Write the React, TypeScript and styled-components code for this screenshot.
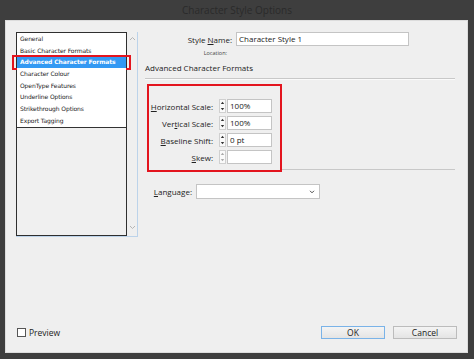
import styled, { createGlobalStyle } from 'styled-components'

const GlobalStyle = createGlobalStyle`
  html, body {
    margin: 0;
    padding: 0;
    background: #3e3e3e;
  }
  body {
    font-family: 'Liberation Sans', Arial, sans-serif;
    color: #222;
  }
`

const pages = [
  'General',
  'Basic Character Formats',
  'Advanced Character Formats',
  'Character Colour',
  'OpenType Features',
  'Underline Options',
  'Strikethrough Options',
  'Export Tagging',
]
const activePage = 2

const scaleFields = [
  { key: 'H', label: 'orizontal Scale:', pre: '', value: '100%' },
  { key: 't', label: 'ical Scale:', pre: 'Ver', value: '100%' },
  { key: 'B', label: 'aseline Shift:', pre: '', value: '0 pt' },
  { key: 'S', label: 'kew:', pre: '', value: '' },
]

export default function App() {
  return (
    <Screen>
      <GlobalStyle />
      <TitleBar>Character Style Options</TitleBar>
      <Panel>
        <Body>
          <ListFrame>
            <PageList>
              {pages.map((p, i) => (
                <PageItem key={p} $active={i === activePage}>
                  {p}
                </PageItem>
              ))}
            </PageList>
            <ScrollTrack>
              <ArrowGlyph viewBox='0 0 7 5'>
                <path d='M1 4 L3.5 1.5 L6 4' />
              </ArrowGlyph>
              <ArrowGlyph viewBox='0 0 7 5'>
                <path d='M1 1 L3.5 3.5 L6 1' />
              </ArrowGlyph>
            </ScrollTrack>
          </ListFrame>

          <Main>
            <FieldRow>
              <FieldLabel $w={87}>
                Style <u>N</u>ame:
              </FieldLabel>
              <TextBox $w={173}>Character Style 1</TextBox>
            </FieldRow>
            <LocationRow>
              <LocationLabel>Location:</LocationLabel>
            </LocationRow>
            <SectionTitle>Advanced Character Formats</SectionTitle>
            <Divider />
            <GroupRow>
              <ScaleGroup>
                {scaleFields.map((f) => (
                  <ScaleRow key={f.key}>
                    <ScaleLabel>
                      {f.pre}
                      <u>{f.key}</u>
                      {f.label}
                    </ScaleLabel>
                    <Spinner viewBox='0 0 7 14'>
                      <rect x='0.5' y='0.5' width='6' height='13' fill='#fafafa' stroke='#d0d0d0' />
                      <path d='M1.8 5 L3.5 2.8 L5.2 5 Z' fill={f.value ? '#333' : '#aaa'} />
                      <path d='M1.8 9 L3.5 11.2 L5.2 9 Z' fill={f.value ? '#333' : '#aaa'} />
                    </Spinner>
                    <TextBox $w={45}>{f.value}</TextBox>
                  </ScaleRow>
                ))}
              </ScaleGroup>
              <TrailLine />
            </GroupRow>
            <LanguageRow>
              <FieldLabel $w={40}>
                <u>L</u>anguage:
              </FieldLabel>
              <Select>
                <Chevron viewBox='0 0 7 5'>
                  <path d='M1 1 L3.5 3.5 L6 1' />
                </Chevron>
              </Select>
            </LanguageRow>
          </Main>
        </Body>

        <Footer>
          <CheckRow>
            <CheckBox />
            <span>Preview</span>
          </CheckRow>
          <Buttons>
            <Button $primary>OK</Button>
            <Button>Cancel</Button>
          </Buttons>
        </Footer>
      </Panel>
    </Screen>
  )
}

const Screen = styled.div`
  width: 474px;
  height: 359px;
  background: #3e3e3e;
  overflow: hidden;
`

const TitleBar = styled.div`
  height: 20px;
  line-height: 20px;
  text-align: center;
  font-family: 'Open Sans', 'Liberation Sans', sans-serif;
  font-size: 10px;
  color: #2a2a2a;
`

const Panel = styled.div`
  box-sizing: border-box;
  margin: 0 6px 0 5px;
  height: 333px;
  background: #efefef;
  border: 1px solid #dcdcdc;
  display: flex;
  flex-direction: column;
  padding: 11px 0 0 10px;
`

const Body = styled.div`
  flex: 1;
  display: flex;
  gap: 7px;
`

const ListFrame = styled.div`
  box-sizing: border-box;
  width: 122px;
  height: 205px;
  display: flex;
  border: 1px solid #bcd3ea;
  border-left: none;
  border-top: none;
`

const PageList = styled.div`
  box-sizing: border-box;
  width: 111px;
  height: 204px;
  border: 1px solid #2f2f2f;
  background: #f0f0f0;
`

const PageItem = styled.div<{ $active?: boolean }>`
  position: relative;
  height: 11.7px;
  line-height: 11.7px;
  padding-left: 3px;
  font-family: 'DejaVu Sans', sans-serif;
  font-size: 6px;
  letter-spacing: -0.1px;
  white-space: nowrap;
  color: ${(p) => (p.$active ? '#fff' : '#1a1a1a')};
  font-weight: ${(p) => (p.$active ? 'bold' : 'normal')};
  background: ${(p) => (p.$active ? '#3399f3' : '#fff')};
  &:last-child {
    border-bottom: 1px solid #333;
  }
  ${(p) =>
    p.$active &&
    `
    &::after {
      content: '';
      position: absolute;
      left: -5px;
      right: -5px;
      top: -1.5px;
      bottom: -1.5px;
      border: 2px solid #e3141e;
    }
  `}
`

const ScrollTrack = styled.div`
  width: 10px;
  display: flex;
  flex-direction: column;
  justify-content: space-between;
  align-items: center;
  padding: 4px 0 6px;
`

const ArrowGlyph = styled.svg`
  width: 7px;
  height: 5px;
  fill: none;
  stroke: #b5b5b5;
  stroke-width: 1;
`

const Main = styled.div`
  width: 310px;
  display: flex;
  flex-direction: column;
  font-family: 'Open Sans', 'Liberation Sans', sans-serif;
  font-size: 8px;
`

const FieldRow = styled.div`
  display: flex;
  align-items: center;
  gap: 4px;
  height: 14px;
`

const FieldLabel = styled.div<{ $w: number }>`
  width: ${(p) => p.$w}px;
  text-align: right;
  white-space: nowrap;
  color: #222;
`

const TextBox = styled.div<{ $w: number }>`
  box-sizing: border-box;
  width: ${(p) => p.$w}px;
  height: 14px;
  line-height: 12px;
  padding-left: 2px;
  background: #fff;
  border: 1px solid #c4c4c4;
  white-space: nowrap;
  color: #222;
`

const LocationRow = styled.div`
  height: 8px;
  margin-top: 3px;
  display: flex;
`

const LocationLabel = styled.div`
  width: 82px;
  text-align: right;
  font-size: 5.5px;
  line-height: 8px;
  color: #444;
`

const SectionTitle = styled.div`
  margin-top: 6px;
  height: 10px;
  line-height: 10px;
  font-size: 8px;
  color: #222;
`

const Divider = styled.div`
  margin-top: 5px;
  height: 1px;
  background: #c8c8c8;
  box-shadow: 0 1px 0 #fafafa;
`

const GroupRow = styled.div`
  display: flex;
  align-items: flex-end;
  margin-top: 5px;
`

const ScaleGroup = styled.div`
  box-sizing: border-box;
  margin-left: 2px;
  width: 135px;
  height: 88px;
  border: 2px solid #e3141e;
  padding-top: 13px;
  display: flex;
  flex-direction: column;
  gap: 3px;
`

const ScaleRow = styled.div`
  display: flex;
  align-items: center;
  height: 14px;
`

const ScaleLabel = styled.div`
  width: 64px;
  text-align: right;
  white-space: nowrap;
  margin-right: 6px;
`

const Spinner = styled.svg`
  width: 7px;
  height: 14px;
  margin-right: 1px;
  flex: none;
`

const TrailLine = styled.div`
  flex: 1;
  height: 1px;
  margin-bottom: 2px;
  background: #c8c8c8;
`

const LanguageRow = styled.div`
  display: flex;
  align-items: center;
  gap: 4px;
  margin-top: 12px;
  margin-left: 7px;
  height: 15px;
`

const Select = styled.div`
  box-sizing: border-box;
  width: 124px;
  height: 15px;
  background: #fff;
  border: 1px solid #c4c4c4;
  display: flex;
  align-items: center;
  justify-content: flex-end;
  padding-right: 4px;
`

const Chevron = styled.svg`
  width: 6px;
  height: 4px;
  fill: none;
  stroke: #444;
  stroke-width: 1.2;
`

const Footer = styled.div`
  display: flex;
  align-items: center;
  justify-content: space-between;
  height: 14px;
  margin-bottom: 13px;
  padding-right: 10px;
  padding-left: 1px;
  font-family: 'Open Sans', 'Liberation Sans', sans-serif;
  font-size: 8.5px;
`

const CheckRow = styled.div`
  display: flex;
  align-items: center;
  gap: 3px;
  color: #222;
`

const CheckBox = styled.div`
  box-sizing: border-box;
  width: 9px;
  height: 9px;
  border: 1px solid #555;
  background: #fff;
`

const Buttons = styled.div`
  display: flex;
  gap: 8px;
`

const Button = styled.div<{ $primary?: boolean }>`
  box-sizing: border-box;
  width: 64px;
  height: 13px;
  line-height: 11px;
  text-align: center;
  color: #222;
  background: linear-gradient(#f4f4f4, #e4e4e4);
  border: 1px solid ${(p) => (p.$primary ? '#7ab3e8' : '#bcbcbc')};
`
